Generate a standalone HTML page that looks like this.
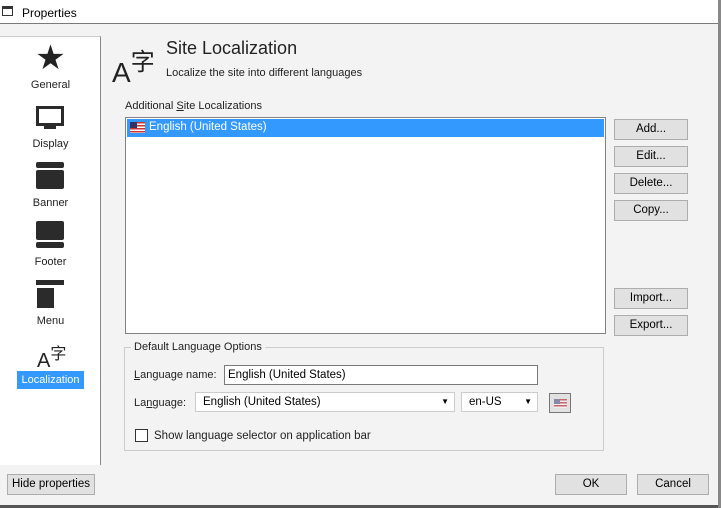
<!DOCTYPE html><html><head><style>
body{margin:0;width:721px;height:508px;position:relative;background:#f3f3f3;font-family:"Liberation Sans",sans-serif;font-size:11.5px;color:#000;overflow:hidden}
.a{position:absolute}
.btn{position:absolute;background:#e1e1e1;border:1px solid #adadad;box-sizing:border-box;text-align:center;line-height:19px;font-size:11.5px}
.nav{position:absolute;left:0;width:101px;text-align:center;font-size:11px;color:#222}
.ic{background:#2b2b2b;position:absolute}
</style></head><body>
<div class="a" style="left:0;top:0;width:721px;height:24px;background:#fff;border-bottom:1px solid #7a7a7a;box-sizing:border-box"></div>
<div class="a" style="left:2px;top:6px;width:11px;height:10px;border:1px solid #333;box-sizing:border-box;border-top-width:3px"></div>
<div class="a" style="left:22px;top:6px;font-size:12px">Properties</div>
<div class="a" style="left:0;top:36px;width:101px;height:429px;background:#fff;border-right:1px solid #888;border-top:1px solid #ccc;box-sizing:border-box"></div>
<div class="nav" style="top:38px;font-size:34px;line-height:40px">★</div>
<div class="nav" style="top:79px">General</div>
<div class="a" style="left:36px;top:106px;width:28px;height:20px;border:3px solid #2b2b2b;box-sizing:border-box"></div>
<div class="ic" style="left:44px;top:126px;width:12px;height:3px"></div>
<div class="nav" style="top:138px">Display</div>
<div class="ic" style="left:36px;top:162px;width:28px;height:6px;border-radius:2px"></div>
<div class="ic" style="left:36px;top:170px;width:28px;height:19px;border-radius:2px"></div>
<div class="nav" style="top:197px">Banner</div>
<div class="ic" style="left:36px;top:221px;width:28px;height:19px;border-radius:2px"></div>
<div class="ic" style="left:36px;top:242px;width:28px;height:6px;border-radius:2px"></div>
<div class="nav" style="top:256px">Footer</div>
<div class="ic" style="left:36px;top:280px;width:28px;height:5px"></div>
<div class="ic" style="left:37px;top:288px;width:17px;height:20px"></div>
<div class="nav" style="top:315px">Menu</div>
<div class="a" style="left:37px;top:340px;font-size:20px;color:#222;line-height:24px">A<span style="font-family:'Noto Sans CJK SC',sans-serif;font-size:16px;vertical-align:8px">字</span></div>
<div class="a" style="left:17px;top:371px;width:67px;height:18px;background:#3399ff;color:#fff;font-size:11px;text-align:center;line-height:18px">Localization</div>
<div class="a" style="left:112px;top:40px;font-size:28px;color:#222;line-height:40px">A<span style="font-family:'Noto Sans CJK SC',sans-serif;font-size:24px;vertical-align:12px">字</span></div>
<div class="a" style="left:166px;top:38px;font-size:18px;color:#222">Site Localization</div>
<div class="a" style="left:166px;top:67px;font-size:11px;color:#222">Localize the site into different languages</div>
<div class="a" style="left:125px;top:100px;font-size:11px;color:#222">Additional <u>S</u>ite Localizations</div>
<div class="a" style="left:125px;top:117px;width:481px;height:217px;background:#fff;border:1px solid #828282;box-sizing:border-box"></div>
<div class="a" style="left:127px;top:119px;width:477px;height:18px;background:#3399ff"></div>
<div class="a" style="left:130px;top:122px;width:15px;height:11px;background:repeating-linear-gradient(#c33 0 1.5px,#fff 1.5px 3px)"><div style="width:7px;height:6px;background:#336"></div></div>
<div class="a" style="left:149px;top:121px;color:#fff;font-size:11.5px">English (United States)</div>
<div class="btn" style="left:614px;top:119px;width:74px;height:21px">Add...</div>
<div class="btn" style="left:614px;top:146px;width:74px;height:21px">Edit...</div>
<div class="btn" style="left:614px;top:173px;width:74px;height:21px">Delete...</div>
<div class="btn" style="left:614px;top:200px;width:74px;height:21px">Copy...</div>
<div class="btn" style="left:614px;top:288px;width:74px;height:21px">Import...</div>
<div class="btn" style="left:614px;top:315px;width:74px;height:21px">Export...</div>
<div class="a" style="left:124px;top:347px;width:480px;height:104px;border:1px solid #ccc;box-sizing:border-box"></div>
<div class="a" style="left:131px;top:341px;padding:0 3px;background:#f3f3f3;font-size:11px;color:#222">Default Language Options</div>
<div class="a" style="left:134px;top:369px;color:#222;font-size:11px"><u>L</u>anguage name:</div>
<div class="a" style="left:224px;top:365px;width:314px;height:20px;background:#fff;border:1px solid #7a7a7a;box-sizing:border-box;padding:3px 3px">English (United States)</div>
<div class="a" style="left:134px;top:397px;color:#222;font-size:11px">La<u>n</u>guage:</div>
<div class="a" style="left:195px;top:392px;width:260px;height:20px;background:#fff;border:1px solid #ccc;box-sizing:border-box;padding:3px 7px">English (United States)<span style="position:absolute;right:5px;top:4px;font-size:8px">▼</span></div>
<div class="a" style="left:461px;top:392px;width:77px;height:20px;background:#fff;border:1px solid #ccc;box-sizing:border-box;padding:3px 7px">en-US<span style="position:absolute;right:5px;top:4px;font-size:8px">▼</span></div>
<div class="a" style="left:549px;top:393px;width:22px;height:20px;background:#e1e1e1;border:1px solid #777;box-sizing:border-box"><div style="margin:5px 0 0 4px;width:13px;height:9px;background:repeating-linear-gradient(#c66 0 1.5px,#eee 1.5px 3px)"><div style="width:6px;height:5px;background:#88a"></div></div></div>
<div class="a" style="left:135px;top:429px;width:13px;height:13px;background:#fff;border:1px solid #333;box-sizing:border-box"></div>
<div class="a" style="left:154px;top:430px;color:#222;font-size:11.5px">Show language selector on application bar</div>
<div class="btn" style="left:7px;top:474px;width:88px;height:21px">Hide properties</div>
<div class="btn" style="left:555px;top:474px;width:72px;height:21px">OK</div>
<div class="btn" style="left:637px;top:474px;width:72px;height:21px">Cancel</div>
<div class="a" style="left:0;top:505px;width:721px;height:3px;background:#555"></div>
<div class="a" style="left:718px;top:0;width:3px;height:508px;background:#888"></div>
</body></html>
